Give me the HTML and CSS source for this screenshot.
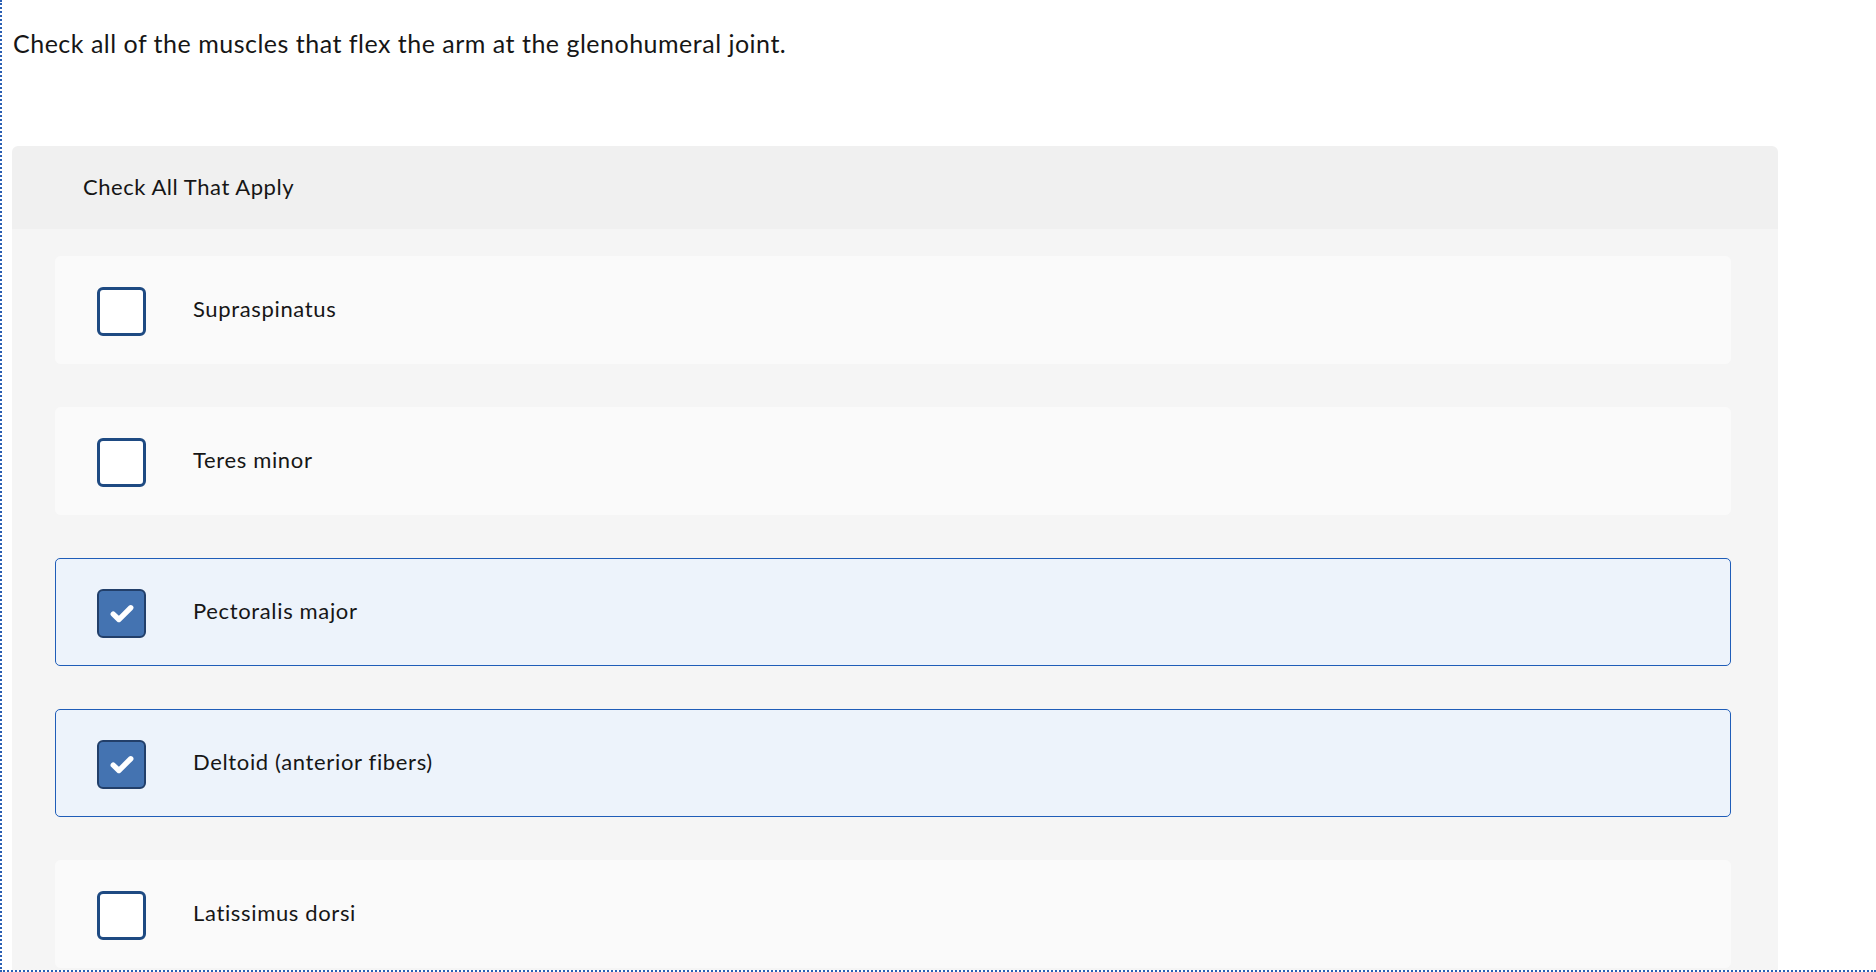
FILE: index.html
```html
<!DOCTYPE html>
<html lang="en">
<head>
    <meta charset="UTF-8">
    <title>Check All That Apply</title>
    <link rel="stylesheet" href="styles.css">
</head>
<body>
    <div class="frame">
        <p class="question">Check all of the muscles that flex the arm at the glenohumeral joint.</p>

        <div class="panel">
            <div class="panel-head">Check All That Apply</div>
            <div class="panel-body">
                <label class="option">
                    <span class="box"></span>
                    <span class="option-text">Supraspinatus</span>
                </label>
                <label class="option">
                    <span class="box"></span>
                    <span class="option-text">Teres minor</span>
                </label>
                <label class="option checked">
                    <span class="box">
                        <svg viewBox="0 0 24 24" width="28" height="28"><path d="M4.5 13l4.8 4.6L19.5 7.5" fill="none" stroke="#fff" stroke-width="4.6" stroke-linecap="round" stroke-linejoin="round"/></svg>
                    </span>
                    <span class="option-text">Pectoralis major</span>
                </label>
                <label class="option checked">
                    <span class="box">
                        <svg viewBox="0 0 24 24" width="28" height="28"><path d="M4.5 13l4.8 4.6L19.5 7.5" fill="none" stroke="#fff" stroke-width="4.6" stroke-linecap="round" stroke-linejoin="round"/></svg>
                    </span>
                    <span class="option-text">Deltoid (anterior fibers)</span>
                </label>
                <label class="option">
                    <span class="box"></span>
                    <span class="option-text">Latissimus dorsi</span>
                </label>
            </div>
        </div>
    </div>
</body>
</html>
```

FILE: styles.css
```css
body {
    margin: 0;
    font-family: Lato, "Open Sans", sans-serif;
    color: #161616;
    background: #fff;
    overflow: hidden;
}
.frame {
    height: 970px;
    border-left: 2px dotted #2a5fb4;
    border-bottom: 2px dotted #2a5fb4;
    overflow: hidden;
}
.question {
    margin: 0;
    padding: 28px 0 0 11px;
    font-size: 25px;
    letter-spacing: 0.5px;
    line-height: 30px;
}
.panel {
    width: 1766px;
    margin: 88px 0 0 10px;
    border-radius: 6px 6px 0 0;
    overflow: hidden;
}
.panel-head {
    height: 83px;
    box-sizing: border-box;
    padding: 26px 0 0 71px;
    background: #f0f0f0;
    font-size: 22px;
    letter-spacing: 0.55px;
    line-height: 30px;
}
.panel-body {
    background: #f5f5f5;
    padding: 27px 47px 40px 43px;
    display: flex;
    flex-direction: column;
    gap: 43px;
}
.option {
    height: 108px;
    box-sizing: border-box;
    display: flex;
    align-items: center;
    padding: 2px 0 0 41px;
    background: #fafafa;
    border: 1px solid #fafafa;
    border-radius: 5px;
    font-size: 22px;
    letter-spacing: 0.65px;
}
.option.checked {
    background: #edf3fb;
    border-color: #1f5db8;
}
.box {
    width: 49px;
    height: 49px;
    box-sizing: border-box;
    border: 3px solid #1e4a82;
    border-radius: 6px;
    background: #fff;
    display: flex;
    align-items: center;
    justify-content: center;
    flex-shrink: 0;
}
.checked .box {
    background: #4473b1;
    border-color: #223f6a;
    border-width: 2px;
}
.option-text {
    margin-left: 47px;
    padding-bottom: 5px;
}
```
